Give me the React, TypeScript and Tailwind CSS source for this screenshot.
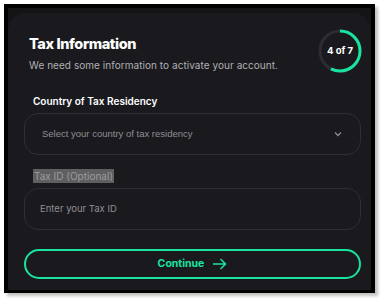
import React from "react";

export default function App() {
  const r = 20;
  const c = 2 * Math.PI * r;
  const frac = 4 / 7;
  return (
    <div className="w-[384px] h-[304px] bg-white relative" style={{ fontFamily: "Inter, 'Noto Sans', sans-serif" }}>
      <div className="absolute left-[4px] top-[4px] w-[371px] h-[289px] bg-black shadow-[3px_3px_3px_rgba(0,0,0,0.25)] pl-[4px] pt-[4px] pr-[4px] pb-[3px]">
        <div className="w-full h-full bg-[#141416] pt-[5px]">
          <div className="w-full h-full bg-[#1a1a1e] rounded-t-[18px] rounded-b-[4px] pl-[16px] pr-[10px] pt-[22px]">
            <div className="flex items-start justify-between">
              <div className="pl-[5px]">
                <div className="text-[14.5px] font-extrabold text-white leading-[18px] tracking-[-0.4px]">Tax Information</div>
                <div className="text-[10px] text-[#b0b0b5] leading-[14px] mt-[5px] tracking-[0.05px]">We need some information to activate your account.</div>
              </div>
              <div className="relative w-[44px] h-[44px] -mr-[1px] -mt-[6px]">
                <svg width="44" height="44" viewBox="0 0 44 44" className="absolute inset-0">
                  <circle cx="22" cy="22" r={r} fill="none" stroke="#2c2c31" strokeWidth="3" />
                  <circle cx="22" cy="22" r={r} fill="none" stroke="#19e3a0" strokeWidth="3" strokeDasharray={`${c * frac} ${c}`} transform="rotate(-90 22 22)" />
                </svg>
                <div className="absolute inset-0 flex items-center justify-center text-[9.5px] font-bold text-white">4 of 7</div>
              </div>
            </div>
            <div className="mt-[21px] pl-[9px] text-[10px] font-semibold text-white leading-[14px]">Country of Tax Residency</div>
            <div className="mt-[5px] h-[42px] rounded-[14px] border border-[#2e2e33] flex items-center justify-between pl-[17px] pr-[18px]">
              <span className="text-[9.5px] text-[#8e8e93]" style={{ fontFamily: "'Liberation Sans', Arial, sans-serif" }}>Select your country of tax residency</span>
              <svg width="8" height="6" viewBox="0 0 8 6" fill="none"><path d="M1 1.5 L4 4.5 L7 1.5" stroke="#8a8a8f" strokeWidth="1.3" /></svg>
            </div>
            <div className="mt-[14px] pl-[9px] flex">
              <span className="bg-[#5f5f62] text-[#9b9b9f] text-[10px] leading-[14px] px-[1px]">Tax ID (Optional)</span>
            </div>
            <div className="mt-[5px] h-[42px] rounded-[14px] border border-[#2e2e33] flex items-center pl-[15px]">
              <span className="text-[9.5px] text-[#8e8e93]">Enter your Tax ID</span>
            </div>
            <button className="mt-[19px] w-full h-[30px] rounded-full border-2 border-[#19e3a0] flex items-center justify-center gap-[8px] text-[#19e3a0]">
              <span className="text-[10.5px] font-bold">Continue</span>
              <svg width="15" height="12" viewBox="0 0 15 12" fill="none"><path d="M1 6 H13.5 M8.5 1 L13.5 6 L8.5 11" stroke="#19e3a0" strokeWidth="1.5" /></svg>
            </button>
          </div>
        </div>
      </div>
    </div>
  );
}
